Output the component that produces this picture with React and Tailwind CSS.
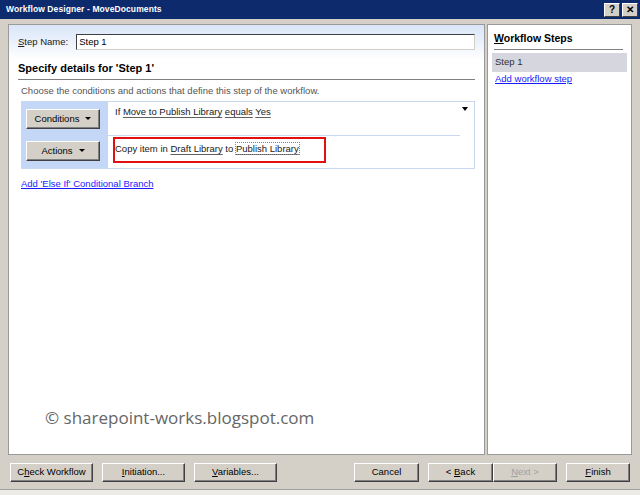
const ui = { fontFamily: '"Liberation Sans", Arial, sans-serif' };

function Btn({ children, className = '', disabled }) {
  return (
    <div
      className={
        'h-[19px] flex items-center justify-center bg-[#d4d0c8] text-[9.5px] border border-t-white border-l-white border-r-[#404040] border-b-[#404040] shadow-[inset_-1px_-1px_0_#808080] ' +
        (disabled ? 'text-[#a0a0a0] ' : 'text-black ') +
        className
      }
    >
      <span className="whitespace-pre">{children}</span>
    </div>
  );
}

function DropBtn({ label }) {
  return (
    <div className="w-[74px] h-[20px] flex items-center justify-center gap-[6px] bg-[#d4d0c8] text-[9.5px] text-black border border-t-white border-l-white border-r-[#404040] border-b-[#404040] shadow-[inset_-1px_-1px_0_#808080]">
      <span>{label}</span>
      <span className="w-0 h-0 border-l-[3px] border-r-[3px] border-t-[3px] border-l-transparent border-r-transparent border-t-black" />
    </div>
  );
}

const Ul = ({ children, dotted }) => (
  <span className={'underline decoration-[#606060] underline-offset-2 ' + (dotted ? 'outline outline-1 outline-dotted outline-[#888]' : '')}>{children}</span>
);

export default function App() {
  return (
    <div className="w-[640px] h-[495px] bg-[#d4d0c8] flex flex-col overflow-hidden" style={ui}>
      {/* title bar */}
      <div className="h-[19px] bg-[#0c2a6c] flex items-center justify-between pl-[6px] pr-[2px]">
        <span className="text-white font-bold text-[8.5px] tracking-[0.1px]">Workflow Designer - MoveDocuments</span>
        <div className="flex gap-[2px]">
          {['?', '✕'].map((c) => (
            <div key={c} className="w-[16px] h-[14px] bg-[#d4d0c8] border border-t-white border-l-white border-r-[#404040] border-b-[#404040] flex items-center justify-center text-[10px] font-bold text-black leading-none">
              {c}
            </div>
          ))}
        </div>
      </div>

      {/* panels */}
      <div className="flex gap-[2px] px-[8px] pt-[5px] h-[436px]">
        <div className="w-[477px] bg-white border border-[#9a9a9a] flex flex-col">
          <div className="bg-gradient-to-b from-[#d9e5f8] to-white pt-[9px] pb-[10px] pl-[9px] pr-[9px] flex items-center gap-[8px]">
            <span className="text-[9.5px] text-[#202020]"><u>S</u>tep Name:</span>
            <div className="flex-1 h-[16px] border border-[#404040] border-r-[#d4d0c8] border-b-[#d4d0c8] bg-white text-[9.5px] px-[2px] flex items-center">Step 1</div>
          </div>
          <div className="px-[9px]">
            <div className="font-bold text-[11px] text-black pb-[2px] border-b border-[#808080]">Specify details for 'Step 1'</div>
            <div className="text-[9.5px] text-[#555] mt-[4px] ml-[3px]">Choose the conditions and actions that define this step of the workflow.</div>
            <div className="ml-[3px] mt-[3px] h-[68px] border border-[#c8d8f0] flex">
              <div className="w-[86px] bg-[#c4d7f6] flex flex-col gap-[12px] pt-[7px] pl-[4px]">
                <DropBtn label="Conditions" />
                <DropBtn label="Actions" />
              </div>
              <div className="flex-1 flex flex-col text-[9.5px] text-[#202020]">
                <div className="h-[34px] relative pl-[7px] pt-[3px] border-b border-[#c8d8f0] mr-[14px]">
                  If <Ul>Move to Publish Library</Ul> <Ul>equals</Ul> <Ul>Yes</Ul>
                  <span className="absolute right-[-8px] top-[5px] w-0 h-0 border-l-[3px] border-r-[3px] border-t-[4px] border-l-transparent border-r-transparent border-t-black" />
                </div>
                <div className="pl-[5px] pt-[1px]">
                  <div className="w-[213px] h-[26px] border-2 border-[#e01010] pt-[3px] whitespace-nowrap">
                    Copy item in <Ul>Draft Library</Ul> to <Ul dotted>Publish Library</Ul>
                  </div>
                </div>
              </div>
            </div>
            <div className="ml-[3px] mt-[8px] text-[9.5px] text-[#1a1aff] underline">Add 'Else If' Conditional Branch</div>
          </div>
          <div className="mt-auto mb-[24px] pl-[36px] text-[17px] text-[#666]" style={{ fontFamily: '"Open Sans", "Noto Sans", sans-serif' }}>
            © sharepoint-works.blogspot.com
          </div>
        </div>

        <div className="w-[145px] bg-white border border-[#9a9a9a] px-[4px] pt-[6px]">
          <div className="font-bold text-[10.5px] text-black pb-[2px] ml-[2px] mr-[4px] border-b border-[#808080]"><u>W</u>orkflow Steps</div>
          <div className="mt-[3px] h-[19px] bg-[#d6d6de] text-[9.5px] text-[#303030] flex items-center pl-[3px]">Step 1</div>
          <div className="text-[9.5px] text-[#1a1aff] underline pl-[3px]">Add workflow step</div>
        </div>
      </div>

      {/* buttons */}
      <div className="flex items-center px-[10px] mt-[8px] h-[19px]">
        <div className="flex gap-[9px]">
          <Btn className="w-[83px]">C<u>h</u>eck Workflow</Btn>
          <Btn className="w-[83px]"><u>I</u>nitiation...</Btn>
          <Btn className="w-[83px]"><u>V</u>ariables...</Btn>
        </div>
        <div className="ml-auto flex items-center">
          <Btn className="w-[65px] mr-[9px]">Cancel</Btn>
          <Btn className="w-[65px]">{'< '}<u>B</u>ack</Btn>
          <Btn className="w-[64px] mr-[9px]" disabled><u>N</u>ext &gt;</Btn>
          <Btn className="w-[64px]"><u>F</u>inish</Btn>
        </div>
      </div>
      <div className="flex-1" />
      <div className="h-[6px] border-t border-[#a0a0a0] bg-[#ecebe6]" />
    </div>
  );
}
